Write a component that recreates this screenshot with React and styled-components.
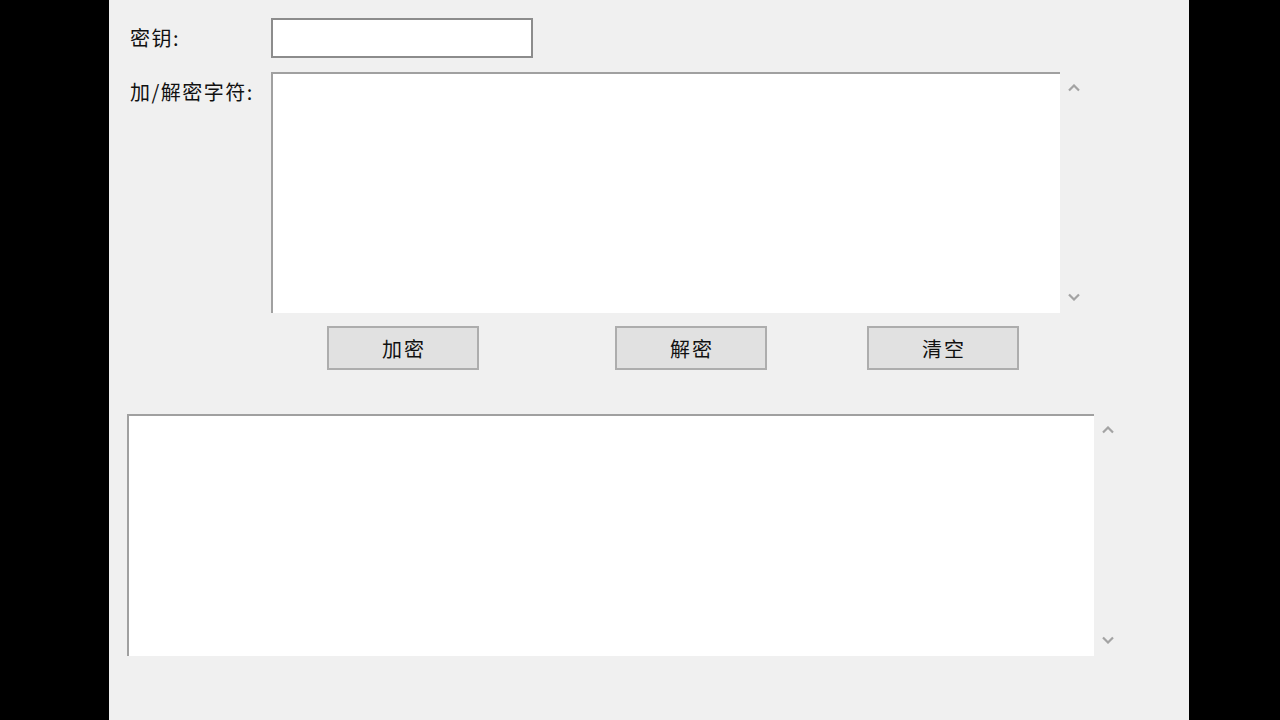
import React from "react"
import styled, { createGlobalStyle } from "styled-components"

const GlobalStyle = createGlobalStyle`
  html, body {
    margin: 0;
    padding: 0;
    background: #000;
  }
  body {
    font-family: "Noto Sans CJK SC", "Noto Sans", sans-serif;
    color: #111;
  }
`

const Chevron = ({ down }) => (
  <svg width="12" height="8" viewBox="0 0 12 8">
    <polyline
      points={down ? "1,1.5 6,6.5 11,1.5" : "1,6.5 6,1.5 11,6.5"}
      fill="none"
      stroke="#a3a3a3"
      strokeWidth="2.2"
    />
  </svg>
)

const Memo = ({ width, height }) => (
  <MemoRow>
    <MemoBox $w={width} $h={height} />
    <ScrollTrack>
      <Chevron />
      <Chevron down />
    </ScrollTrack>
  </MemoRow>
)

export default function App() {
  return (
    <>
      <GlobalStyle />
      <Window>
        <Field>
          <Label>密钥:</Label>
          <KeyInput />
        </Field>
        <Field $top="14px" $align="start">
          <Label $pad="8px">加/解密字符:</Label>
          <Memo width={789} height={241} />
        </Field>
        <Buttons>
          <Button $ml="200px">加密</Button>
          <Button $ml="136px">解密</Button>
          <Button $ml="100px">清空</Button>
        </Buttons>
        <Output>
          <Memo width={967} height={242} />
        </Output>
      </Window>
    </>
  )
}

const Window = styled.div`
  margin-left: 109px;
  width: 1080px;
  height: 720px;
  box-sizing: border-box;
  padding: 18px 0 0 18px;
  background: #f0f0f0;
`

const Field = styled.div`
  display: grid;
  grid-template-columns: 144px auto;
  align-items: ${(p) => p.$align || "center"};
  margin-top: ${(p) => p.$top || "0"};
`

const Label = styled.span`
  padding-left: 3px;
  padding-top: ${(p) => p.$pad || "0"};
  font-size: 20px;
  line-height: 24px;
  letter-spacing: 1.5px;
  white-space: nowrap;
`

const KeyInput = styled.div`
  width: 262px;
  height: 40px;
  box-sizing: border-box;
  background: #fff;
  border: 2px solid #8c8c8c;
`

const MemoRow = styled.div`
  display: flex;
`

const MemoBox = styled.div`
  width: ${(p) => p.$w}px;
  height: ${(p) => p.$h}px;
  box-sizing: border-box;
  background: #fff;
  border-top: 2px solid #a0a0a0;
  border-left: 2px solid #a0a0a0;
`

const ScrollTrack = styled.div`
  width: 28px;
  display: flex;
  flex-direction: column;
  align-items: center;
  justify-content: space-between;
  padding: 12px 0 12px;
  box-sizing: border-box;
`

const Buttons = styled.div`
  display: flex;
  margin-top: 13px;
`

const Button = styled.div`
  width: 152px;
  height: 44px;
  margin-left: ${(p) => p.$ml};
  box-sizing: border-box;
  display: flex;
  align-items: center;
  justify-content: center;
  background: #e1e1e1;
  border: 2px solid #adadad;
  font-size: 20px;
  letter-spacing: 2px;
  text-indent: 2px;
`

const Output = styled.div`
  margin-top: 44px;
`
